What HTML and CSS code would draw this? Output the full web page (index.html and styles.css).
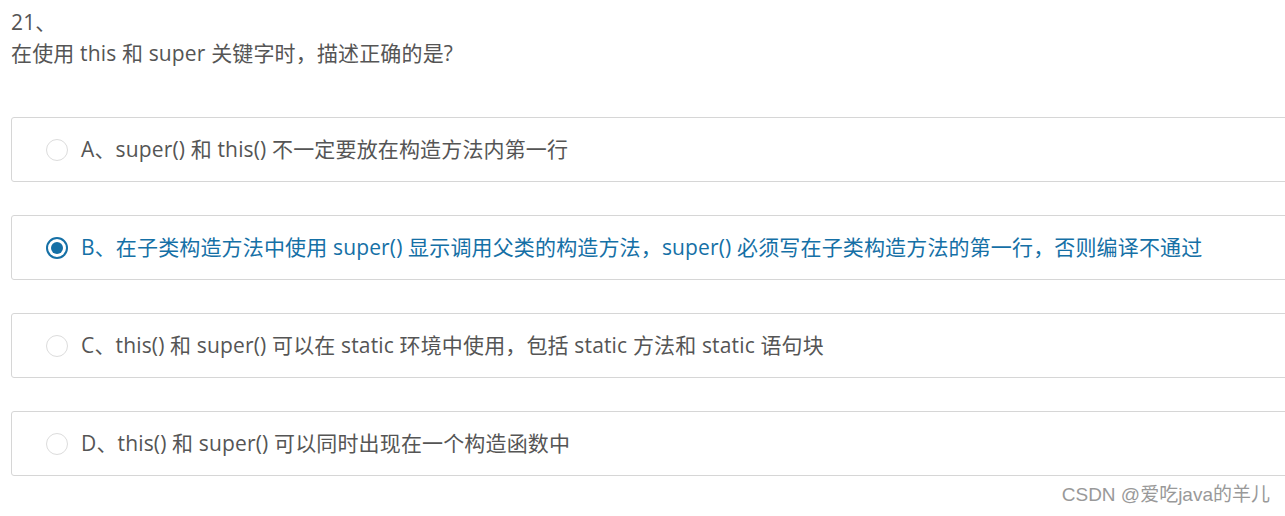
FILE: index.html
```html
<!DOCTYPE html>
<html lang="zh-CN">
  <head>
    <meta charset="UTF-8" />
    <title>题目 21</title>
    <link rel="stylesheet" href="styles.css">
  </head>
  <body>
    <div class="question">
      <div class="q-title">
        <p class="q-num">21、</p>
        <p class="q-text">在使用 this 和 super 关键字时，描述正确的是?</p>
      </div>
      <div class="options">
        <label class="option">
          <span class="radio"></span>
          <span class="opt-text">A、super() 和 this() 不一定要放在构造方法内第一行</span>
        </label>
        <label class="option checked">
          <span class="radio"></span>
          <span class="opt-text">B、在子类构造方法中使用 super() 显示调用父类的构造方法，super() 必须写在子类构造方法的第一行，否则编译不通过</span>
        </label>
        <label class="option">
          <span class="radio"></span>
          <span class="opt-text">C、this() 和 super() 可以在 static 环境中使用，包括 static 方法和 static 语句块</span>
        </label>
        <label class="option">
          <span class="radio"></span>
          <span class="opt-text">D、this() 和 super() 可以同时出现在一个构造函数中</span>
        </label>
      </div>
    </div>
    <div class="watermark">CSDN @爱吃java的羊儿</div>
  </body>
</html>
```

FILE: styles.css
```css
body {
  margin: 0;
  padding: 7px 0 0 11px;
  font-family: "Open Sans", "Noto Sans CJK SC", sans-serif;
  color: #555;
  background: #fff;
  overflow: hidden;
}
.q-title {
  font-size: 21px;
  line-height: 31px;
  letter-spacing: 0.15px;
}
.q-num,
.q-text {
  margin: 0;
}
.options {
  margin-top: 48px;
  display: flex;
  flex-direction: column;
  gap: 33px;
  margin-right: -12px;
}
.option {
  display: flex;
  align-items: center;
  height: 63px;
  border: 1px solid #d6d6d6;
  border-radius: 3px;
  padding-left: 34px;
  font-size: 21px;
  letter-spacing: 0.15px;
  color: #555;
  cursor: pointer;
}
.opt-text {
  margin-top: -3px;
}
.radio {
  width: 22px;
  height: 22px;
  border: 1px solid #dcdcdc;
  border-radius: 50%;
  margin-right: 13px;
  box-sizing: border-box;
  position: relative;
  flex-shrink: 0;
}
.option.checked {
  color: #1570a6;
}
.option.checked .radio {
  border: 2px solid #1570a6;
}
.option.checked .radio::after {
  content: "";
  position: absolute;
  left: 3px;
  top: 3px;
  width: 12px;
  height: 12px;
  border-radius: 50%;
  background: #1570a6;
}
.watermark {
  position: absolute;
  right: 15px;
  bottom: 10px;
  font-family: "Liberation Sans", "Noto Sans CJK SC", sans-serif;
  font-size: 19px;
  color: #999;
}
```
